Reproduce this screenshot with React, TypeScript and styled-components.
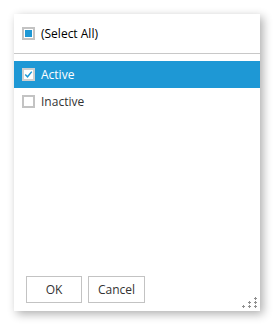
import React from "react";
import styled, { createGlobalStyle } from "styled-components";

const GlobalStyle = createGlobalStyle`
  html, body {
    margin: 0;
    padding: 0;
    background: #ffffff;
    font-family: "Open Sans", "Noto Sans", sans-serif;
  }
`;

const items = [
  { label: "Active", checked: true },
  { label: "Inactive", checked: false },
];

// plus marks of the resize grip, as [x, y] of each 3x3 cross
const gripDots = [
  [12, 0],
  [6, 4],
  [12, 4],
  [0, 8],
  [6, 8],
  [12, 8],
];

const App = () => {
  return (
    <>
      <GlobalStyle />
      <Page>
        <Panel>
          <Header>
            <Box $state="partial">
              <Fill />
            </Box>
            <Label>(Select All)</Label>
          </Header>
          <List>
            {items.map((item) => (
              <Row key={item.label} $selected={item.checked}>
                <Box $state={item.checked ? "checked" : "empty"}>
                  {item.checked && (
                    <svg width="11" height="11" viewBox="0 0 11 11">
                      <path d="M1.5 5.5 L4.3 8.3 L9.5 2" fill="none" stroke="#1e98d5" strokeWidth="1.8" />
                    </svg>
                  )}
                </Box>
                <Label>{item.label}</Label>
              </Row>
            ))}
          </List>
          <Footer>
            <Button $w={56}>OK</Button>
            <Button $w={57}>Cancel</Button>
          </Footer>
          <Grip>
            <svg width="15" height="11" viewBox="0 0 15 11" shapeRendering="crispEdges">
              {gripDots.map(([x, y]) => (
                <g key={`${x}-${y}`} fill="#8f8f8f">
                  <rect x={x} y={y + 1} width="3" height="1" />
                  <rect x={x + 1} y={y} width="1" height="3" />
                </g>
              ))}
            </svg>
          </Grip>
        </Panel>
      </Page>
    </>
  );
};

export default App;

const Page = styled.div`
  width: 274px;
  height: 327px;
  padding: 14px 0 0 14px;
  box-sizing: border-box;
`;

const Panel = styled.div`
  position: relative;
  width: 246px;
  height: 297px;
  background: #fff;
  box-shadow: 3px 3px 9px rgba(0, 0, 0, 0.32);
  display: flex;
  flex-direction: column;
`;

const Header = styled.div`
  height: 39px;
  display: flex;
  align-items: center;
  padding-left: 8px;
  border-bottom: 1px solid #c8c8c8;
`;

const List = styled.div`
  margin-top: 7px;
  flex: 1;
`;

const Row = styled.div<{ $selected: boolean }>`
  height: 27px;
  display: flex;
  align-items: center;
  padding-left: 8px;
  background: ${(p) => (p.$selected ? "#1e98d5" : "transparent")};
  color: ${(p) => (p.$selected ? "#fff" : "#333")};
`;

const Box = styled.span<{ $state: string }>`
  width: 13px;
  height: 13px;
  box-sizing: border-box;
  border: 2px solid ${(p) => (p.$state === "checked" ? "#d0d0d0" : "#c3c3c3")};
  background: #fff;
  display: flex;
  align-items: center;
  justify-content: center;
  flex-shrink: 0;
`;

const Fill = styled.span`
  width: 7px;
  height: 7px;
  background: #1e98d5;
`;

const Label = styled.span`
  margin-left: 6px;
  font-size: 12px;
  line-height: 16px;
`;

const Footer = styled.div`
  display: flex;
  gap: 6px;
  padding: 0 0 8px 12px;
`;

const Button = styled.button<{ $w: number }>`
  width: ${(p) => p.$w}px;
  height: 27px;
  padding: 0;
  background: #fff;
  border: 1px solid #c3c3c3;
  border-radius: 0;
  font-family: "Open Sans", "Noto Sans", sans-serif;
  font-size: 12px;
  color: #333;
`;

const Grip = styled.div`
  position: absolute;
  right: 3px;
  bottom: 3px;
  line-height: 0;
`;
